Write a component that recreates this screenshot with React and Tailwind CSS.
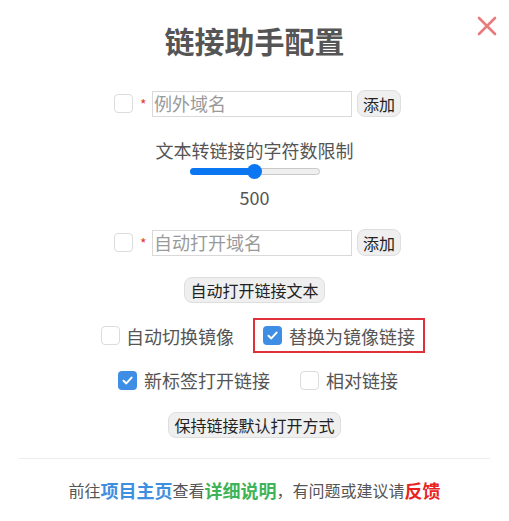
import React from "react";

const FONT = { fontFamily: '"Microsoft YaHei", "Noto Sans CJK SC", "Noto Sans", sans-serif' };

function Box({ checked }) {
  return checked ? (
    <span className="flex h-[19px] w-[19px] shrink-0 items-center justify-center rounded-[4px] bg-[#3d8ee4]">
      <svg width="13" height="13" viewBox="0 0 13 13" fill="none">
        <path d="M2.5 6.8 L5.3 9.4 L10.6 3.6" stroke="white" strokeWidth="2" strokeLinecap="round" strokeLinejoin="round" />
      </svg>
    </span>
  ) : (
    <span className="block h-[19px] w-[19px] shrink-0 rounded-[4px] border border-[#dcdcdc] bg-white" />
  );
}

function DomainRow({ placeholder }) {
  return (
    <div className="flex h-[27px] items-center pl-[114px]">
      <Box />
      <span className="ml-[7px] w-[12px] text-[14px] leading-none text-[#e53935]">*</span>
      <input
        readOnly
        placeholder={placeholder}
        className="h-[26px] w-[200px] border border-[#d9d9d9] bg-white px-[1px] text-[18px] text-[#555] outline-none placeholder:text-[#9a9a9a]"
        style={FONT}
      />
      <button className="ml-[5px] h-[27px] rounded-[8px] border border-[#dedede] bg-[#efefef] px-[5px] text-[16px] leading-[24px] text-[#222]">
        添加
      </button>
    </div>
  );
}

function Btn({ children }) {
  return (
    <div className="flex justify-center">
      <button className="h-[26px] rounded-[8px] border border-[#dedede] bg-[#efefef] px-[5px] text-[16px] leading-[24px] text-[#222]">
        {children}
      </button>
    </div>
  );
}

export default function App() {
  return (
    <div className="relative h-[521px] w-[509px] overflow-hidden bg-white text-[#555]" style={FONT}>
      <svg className="absolute left-[476px] top-[15px]" width="22" height="22" viewBox="0 0 22 22">
        <path d="M3 3 L19 19 M19 3 L3 19" stroke="#e87b7b" strokeWidth="2.6" strokeLinecap="round" />
      </svg>

      <div className="pt-[20px]">
        <h1 className="h-[40px] text-center text-[30px] font-bold leading-[40px] text-[#555]">链接助手配置</h1>

        <div className="mt-[30px]">
          <DomainRow placeholder="例外域名" />
        </div>

        <div className="mt-[22px] h-[22px] text-center text-[18px] leading-[22px]">文本转链接的字符数限制</div>

        <div className="mt-[2px] flex h-[16px] items-center justify-center">
          <div className="relative h-[7px] w-[130px] rounded-full border border-[#c9c9c9] bg-[#efefef]">
            <div className="absolute -left-px -top-px h-[7px] w-[66px] rounded-full bg-[#0b76f2]" />
            <div className="absolute left-[56px] top-[-5px] h-[15px] w-[15px] rounded-full bg-[#0b76f2]" />
          </div>
        </div>

        <div className="mt-[7px] h-[22px] text-center text-[18px] leading-[22px]">500</div>

        <div className="mt-[21px]">
          <DomainRow placeholder="自动打开域名" />
        </div>

        <div className="mt-[21px]">
          <Btn>自动打开链接文本</Btn>
        </div>

        <div className="mt-[15px] flex h-[35px] items-center pl-[101px]">
          <label className="flex items-center gap-[6px] text-[18px] leading-[24px]">
            <Box />
            <span>自动切换镜像</span>
          </label>
          <div className="ml-[19px] flex h-[35px] items-center gap-[7px] border-2 border-[#e0313b] pl-[8px] pr-[8px] text-[18px] leading-[24px]">
            <Box checked />
            <span>替换为镜像链接</span>
          </div>
        </div>

        <div className="mt-[14px] flex h-[26px] items-center pl-[118px] text-[18px] leading-[24px]">
          <label className="flex items-center gap-[7px]">
            <Box checked />
            <span>新标签打开链接</span>
          </label>
          <label className="ml-[30px] flex items-center gap-[7px]">
            <Box />
            <span>相对链接</span>
          </label>
        </div>

        <div className="mt-[19px]">
          <Btn>保持链接默认打开方式</Btn>
        </div>

        <div className="mx-[19px] mt-[20px] h-px bg-[#ececec]" />

        <div className="mt-[19px] flex h-[24px] items-center justify-center text-[16px] text-[#555]">
          <span>前往</span>
          <span className="text-[18px] font-bold text-[#3f8fe0]">项目主页</span>
          <span>查看</span>
          <span className="text-[18px] font-bold text-[#3fb35a]">详细说明</span>
          <span>，有问题或建议请</span>
          <span className="text-[18px] font-bold text-[#e8231d]">反馈</span>
        </div>
      </div>
    </div>
  );
}
